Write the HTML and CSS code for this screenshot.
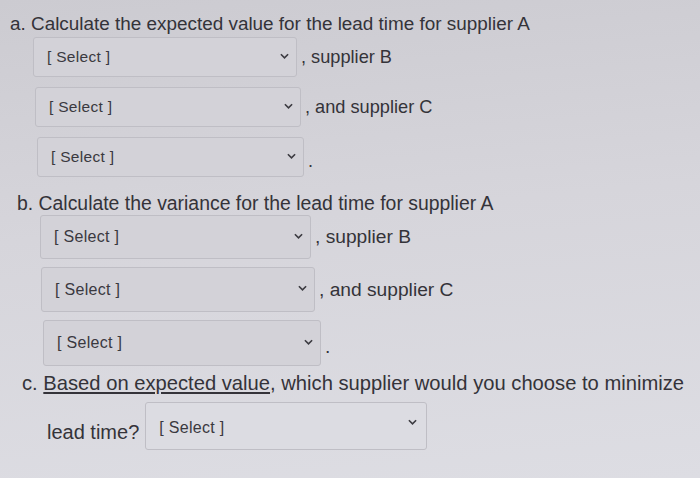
FILE: index.html
```html
<!DOCTYPE html>
<html lang="en">
<head>
    <meta charset="UTF-8">
    <link rel="stylesheet" href="styles.css">
    <title>Lead time quiz</title>
</head>
<body>
    <div class="quiz">
        <p class="question q-a">a. Calculate the expected value for the lead time for supplier A</p>
        <div class="row r1">
            <div class="select"><span>[ Select ]</span><svg class="chev" viewBox="0 0 10 6"><path d="M1 1l4 4 4-4"/></svg></div>
            <span class="after">, supplier B</span>
        </div>
        <div class="row r2">
            <div class="select"><span>[ Select ]</span><svg class="chev" viewBox="0 0 10 6"><path d="M1 1l4 4 4-4"/></svg></div>
            <span class="after">, and supplier C</span>
        </div>
        <div class="row r3">
            <div class="select"><span>[ Select ]</span><svg class="chev" viewBox="0 0 10 6"><path d="M1 1l4 4 4-4"/></svg></div>
            <span class="after dot">.</span>
        </div>

        <p class="question q-b">b. Calculate the variance for the lead time for supplier A</p>
        <div class="row r4">
            <div class="select big"><span>[ Select ]</span><svg class="chev" viewBox="0 0 10 6"><path d="M1 1l4 4 4-4"/></svg></div>
            <span class="after">, supplier B</span>
        </div>
        <div class="row r5">
            <div class="select big"><span>[ Select ]</span><svg class="chev" viewBox="0 0 10 6"><path d="M1 1l4 4 4-4"/></svg></div>
            <span class="after">, and supplier C</span>
        </div>
        <div class="row r6">
            <div class="select big"><span>[ Select ]</span><svg class="chev" viewBox="0 0 10 6"><path d="M1 1l4 4 4-4"/></svg></div>
            <span class="after dot">.</span>
        </div>

        <p class="question q-c">c. <u>Based on expected value</u>, which supplier would you choose to minimize</p>
        <div class="row r7">
            <span class="before">lead time?</span>
            <div class="select last"><span>[ Select ]</span><svg class="chev" viewBox="0 0 10 6"><path d="M1 1l4 4 4-4"/></svg></div>
        </div>
    </div>
</body>
</html>
```

FILE: styles.css
```css
body {
    margin: 0;
    padding: 0;
    background: linear-gradient(175deg, #cccbd1 0%, #d6d5db 45%, #dddde3 100%);
    height: 478px;
    overflow: hidden;
    font-family: "Liberation Sans", Arial, sans-serif;
    color: #343339;
}

.quiz {
    padding: 14px 0 0 10px;
}

.question {
    margin: 0;
    font-size: 18.9px;
    line-height: 20px;
}

.q-a { margin-left: 0; }
.q-b { margin: 16px 0 2px 7px; font-size: 19.4px; }
.q-c { margin: 7px 0 0 12px; font-size: 20.2px; }

.row {
    display: flex;
    align-items: center;
    margin-top: 10px;
}
.r1 { margin-left: 23px; margin-top: 3px; }
.r2 { margin-left: 25px; }
.r3 { margin-left: 27px; }
.r4 { margin-left: 30px; margin-top: 0; }
.r5 { margin-left: 31px; margin-top: 8px; }
.r6 { margin-left: 33px; margin-top: 8px; }
.r7 { margin-left: 37px; margin-top: 9px; }

.select {
    display: flex;
    align-items: center;
    justify-content: space-between;
    box-sizing: border-box;
    width: 264px;
    height: 40px;
    padding: 0 7px 0 13px;
    background: #d3d2d8;
    border: 1px solid #bfbec5;
    border-radius: 3px;
    font-size: 15.5px;
    letter-spacing: 0.3px;
    color: #3a393f;
}
.r2 .select { width: 266px; }
.r3 .select { width: 267px; }

.select.big {
    height: 44px;
    width: 271px;
    font-size: 16px;
}
.r5 .select.big { width: 274px; height: 45px; }
.r6 .select.big { width: 278px; height: 46px; }

.select.last {
    width: 282px;
    height: 48px;
    margin-left: 6px;
    background: #dcdce2;
    padding-top: 4px;
    padding-right: 9px;
    font-size: 16px;
}

.chev {
    width: 9px;
    height: 6px;
    fill: none;
    stroke: #3c3b41;
    stroke-width: 1.8;
    margin-top: -3px;
}
.select.last .chev { margin-top: -12px; }

.after {
    margin-left: 4px;
    font-size: 18.2px;
}
.big + .after { font-size: 19.2px; }
.dot { margin-top: 8px; }

.before {
    font-size: 20px;
    margin-top: 12px;
}
```
